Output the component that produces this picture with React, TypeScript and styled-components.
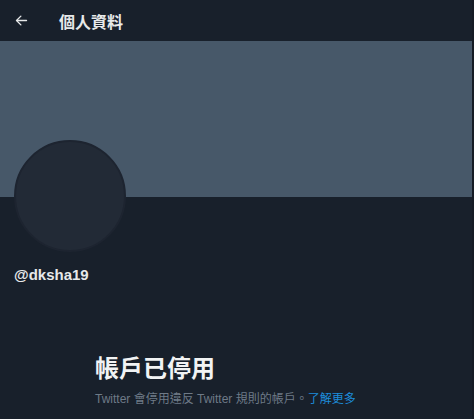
import styled, { createGlobalStyle } from "styled-components";

const GlobalStyle = createGlobalStyle`
  html, body {
    margin: 0;
    padding: 0;
    background: #18202b;
  }
  body {
    font-family: "Liberation Sans", Arial, "Noto Sans CJK TC", sans-serif;
  }
`;

const Page = styled.div`
  width: 474px;
  height: 419px;
  background: #18202b;
  overflow: hidden;
  display: flex;
  flex-direction: column;
  border-right: 2px solid #151b24;
  box-sizing: border-box;
`;

const Header = styled.div`
  height: 41px;
  display: flex;
  align-items: center;
  padding-left: 14px;
  gap: 30px;
  box-sizing: border-box;
`;

const BackButton = styled.button`
  background: transparent;
  border: none;
  padding: 0;
  width: 15px;
  height: 15px;
  display: flex;
  color: #e7e9ea;
  cursor: pointer;

  svg {
    width: 15px;
    height: 15px;
  }
`;

const HeaderTitle = styled.h2`
  margin: 0;
  font-size: 16px;
  font-weight: 700;
  color: #e7e9ea;
  font-family: "Noto Sans CJK TC", sans-serif;
`;

const Banner = styled.div`
  height: 156px;
  background: #475869;
`;

const ProfileArea = styled.div`
  flex: 1;
  display: flex;
  flex-direction: column;
  padding-left: 14px;
`;

const Avatar = styled.div`
  width: 108px;
  height: 108px;
  border-radius: 50%;
  background: #222a36;
  border: 2px solid #1d2430;
  margin-top: -57px;
`;

const Handle = styled.div`
  margin-top: 14px;
  font-size: 15px;
  font-weight: 700;
  color: #e7e9ea;
`;

const Notice = styled.div`
  margin-top: 68px;
  padding-left: 81px;
  display: flex;
  flex-direction: column;
  gap: 8px;
`;

const NoticeTitle = styled.h1`
  margin: 0;
  font-family: "Noto Sans CJK TC", sans-serif;
  font-size: 24px;
  font-weight: 700;
  line-height: 32px;
  color: #f1f3f4;
`;

const NoticeText = styled.p`
  margin: 0;
  font-size: 12px;
  line-height: 16px;
  color: #6e7a87;
  font-family: "Liberation Sans", Arial, "Noto Sans CJK TC", sans-serif;
`;

const Link = styled.a`
  color: #1d8ddb;
  text-decoration: none;
`;

export default function App() {
  return (
    <>
      <GlobalStyle />
      <Page>
        <Header>
          <BackButton aria-label="返回">
            <svg viewBox="0 0 24 24" fill="none" stroke="currentColor" strokeWidth="2.2" strokeLinecap="round" strokeLinejoin="round">
              <path d="M20 12H5" />
              <path d="M11 5l-7 7 7 7" />
            </svg>
          </BackButton>
          <HeaderTitle>個人資料</HeaderTitle>
        </Header>
        <Banner />
        <ProfileArea>
          <Avatar />
          <Handle>@dksha19</Handle>
          <Notice>
            <NoticeTitle>帳戶已停用</NoticeTitle>
            <NoticeText>
              Twitter 會停用違反 Twitter 規則的帳戶。<Link href="#">了解更多</Link>
            </NoticeText>
          </Notice>
        </ProfileArea>
      </Page>
    </>
  );
}
